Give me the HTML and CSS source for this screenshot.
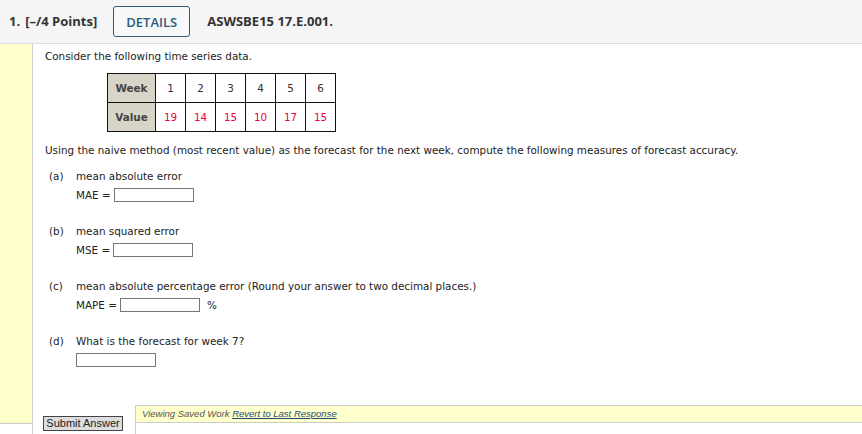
FILE: index.html
```html
<!DOCTYPE html>
<html lang="en">
<head>
  <meta charset="UTF-8">
  <title>ASWSBE15 17.E.001.</title>
  <link rel="stylesheet" href="styles.css">
</head>
<body>
  <header class="qhead">
    <span class="qnum">1.</span>
    <span class="points">[&ndash;/4 Points]</span>
    <button class="details">DETAILS</button>
    <span class="qcode">ASWSBE15 17.E.001.</span>
  </header>

  <div class="qbody">
    <div class="gutter"><div class="gutter-fill"></div></div>
    <div class="content">
      <p class="intro">Consider the following time series data.</p>

      <table class="data">
        <tr>
          <th>Week</th>
          <td>1</td><td>2</td><td>3</td><td>4</td><td>5</td><td>6</td>
        </tr>
        <tr>
          <th>Value</th>
          <td class="val">19</td><td class="val">14</td><td class="val">15</td>
          <td class="val">10</td><td class="val">17</td><td class="val">15</td>
        </tr>
      </table>

      <p class="lead">Using the naive method (most recent value) as the forecast for the next week, compute the following measures of forecast accuracy.</p>

      <div class="part">
        <span class="label">(a)</span>
        <div class="part-body">
          <p>mean absolute error</p>
          <p class="answer">MAE = <input type="text"></p>
        </div>
      </div>

      <div class="part">
        <span class="label">(b)</span>
        <div class="part-body">
          <p>mean squared error</p>
          <p class="answer">MSE = <input type="text"></p>
        </div>
      </div>

      <div class="part">
        <span class="label">(c)</span>
        <div class="part-body">
          <p>mean absolute percentage error (Round your answer to two decimal places.)</p>
          <p class="answer">MAPE = <input type="text"> <span class="unit">%</span></p>
        </div>
      </div>

      <div class="part">
        <span class="label">(d)</span>
        <div class="part-body">
          <p>What is the forecast for week 7?</p>
          <p class="answer"><input type="text"></p>
        </div>
      </div>

      <div class="actions">
        <button class="submit">Submit Answer</button>
        <div class="notice">
          <div class="notice-bar">Viewing Saved Work <a href="#">Revert to Last Response</a></div>
        </div>
      </div>
    </div>
  </div>
</body>
</html>
```

FILE: styles.css
```css
body {
  margin: 0;
  background-color: #fff;
  font-family: "DejaVu Sans", Verdana, sans-serif;
  font-size: 10.4px;
  line-height: 13px;
  color: #222;
}
p {
  margin: 0;
}

.qhead {
  display: flex;
  align-items: center;
  height: 43px;
  padding-left: 9px;
  background-color: #f5f5f5;
  border-bottom: 1px solid #dcdcdc;
  font-family: "Open Sans", sans-serif;
  font-size: 13px;
  font-weight: bold;
  color: #333;
}
.qnum {
  margin-right: 5px;
}
.points {
  margin-right: 16px;
}
.details {
  width: 77px;
  height: 31px;
  margin-right: 17px;
  background-color: #f8f8f8;
  border: 1px solid #2b5b7e;
  border-radius: 3px;
  font-family: "Open Sans", sans-serif;
  font-size: 13px;
  font-weight: 600;
  color: #2b5b7e;
  padding: 0;
}

.qbody {
  display: flex;
}
.gutter {
  width: 32px;
  flex: none;
  border-right: 1px solid #d0d0d0;
}
.gutter-fill {
  height: 379px;
  background-color: #ffffcc;
  border-bottom: 1px solid #ccc;
}
.content {
  flex: 1;
  padding-left: 12px;
}

.intro {
  margin-top: 6px;
}
.data {
  border-collapse: collapse;
  margin: 10px 0 0 62px;
}
.data th,
.data td {
  border: 1px solid #111;
  height: 28px;
  padding: 0;
  text-align: center;
}
.data th {
  width: 47px;
  background-color: #d8d4c8;
  color: #444;
}
.data td {
  width: 29px;
  color: #333;
}
.data td.val {
  color: #f0003c;
}

.lead {
  margin-top: 12px;
}

.part {
  display: flex;
  margin-top: 13px;
}
.part + .part {
  margin-top: 23px;
}
.label {
  width: 27px;
  padding-left: 4px;
  flex: none;
}
.answer {
  margin-top: 5px;
  display: flex;
  align-items: center;
  gap: 3px;
}
.answer input {
  width: 78px;
  height: 12px;
  margin: 0;
  padding: 0;
  border: 1px solid #777;
}
.unit {
  margin-left: 4px;
}

.actions {
  display: flex;
  align-items: flex-start;
  margin-top: 38px;
}
.submit {
  margin: 11px 0 0 -2px;
  width: 80px;
  height: 15px;
  padding: 0;
  background-color: #ddd;
  border: 1px solid #444;
  border-radius: 0;
  font-family: "Liberation Sans", Arial, sans-serif;
  font-size: 11px;
  line-height: 13px;
  color: #222;
}
.notice {
  flex: 1;
  margin-left: 12px;
  height: 30px;
  border-left: 1px solid #ccc;
}
.notice-bar {
  height: 16px;
  padding-left: 6px;
  background-color: #ffffcc;
  border-top: 1px solid #ccc;
  border-bottom: 1px solid #ccc;
  font-family: "Liberation Sans", Arial, sans-serif;
  font-size: 9.5px;
  font-style: italic;
  color: #555;
  line-height: 15px;
}
.notice-bar a {
  color: #1d4d75;
}
```
